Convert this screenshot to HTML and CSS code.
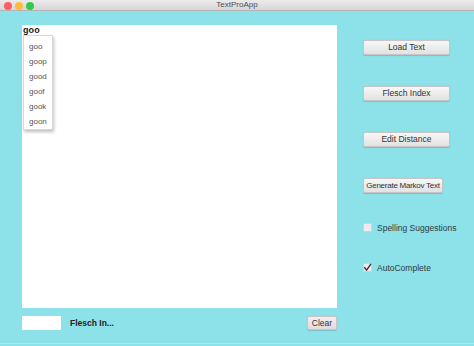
FILE: index.html
```html
<!DOCTYPE html>
<html>
<head>
<meta charset="utf-8">
<link rel="stylesheet" href="styles.css">
</head>
<body>
<div class="window">
  <div class="titlebar">
    <div class="lights">
      <span class="light red"></span>
      <span class="light yellow"></span>
      <span class="light green"></span>
    </div>
    <div class="title">TextProApp</div>
  </div>
  <div class="main">
    <div class="left">
      <div class="editor">
        <div class="typed">goo</div>
        <ul class="popup">
          <li>goo</li>
          <li>goop</li>
          <li>good</li>
          <li>goof</li>
          <li>gook</li>
          <li>goon</li>
        </ul>
      </div>
      <div class="bottom">
        <div class="field"></div>
        <div class="flesch">Flesch In...</div>
        <button class="btn clear">Clear</button>
      </div>
    </div>
    <div class="right">
      <button class="btn wide b1">Load Text</button>
      <button class="btn wide b2">Flesch Index</button>
      <button class="btn wide b3">Edit Distance</button>
      <button class="btn markov">Generate Markov Text</button>
      <label class="check c1"><span class="box"></span>Spelling Suggestions</label>
      <label class="check c2"><span class="box checked"><svg width="9" height="9" viewBox="0 0 9 9"><path d="M1.6 4.6 L3.6 7.2 L7.8 1.2" fill="none" stroke="#2a2a2a" stroke-width="1.3" stroke-linecap="round" stroke-linejoin="round"/></svg></span>AutoComplete</label>
    </div>
  </div>
</div>
</body>
</html>
```

FILE: styles.css
```css
* { box-sizing: border-box; }
html, body { margin: 0; padding: 0; }
body {
  width: 474px;
  height: 346px;
  overflow: hidden;
  background: #8de1e9;
  font-family: "Liberation Sans", Arial, sans-serif;
}
.window {
  width: 474px;
  height: 344px;
  background: #8de1e9;
  border-bottom: 1px solid #a8eaf0;
}
.titlebar {
  height: 11px;
  background: linear-gradient(#ebebeb, #d6d6d6);
  border-bottom: 1px solid #b4b4b4;
  position: relative;
  display: flex;
  align-items: center;
  justify-content: center;
}
.lights {
  position: absolute;
  left: 4px;
  top: 2px;
  display: flex;
  gap: 3px;
}
.light {
  width: 8px;
  height: 8px;
  border-radius: 50%;
  display: block;
}
.red { background: #fc605c; }
.yellow { background: #fdbc40; }
.green { background: #34c84a; }
.title {
  font-size: 8px;
  color: #4e4e4e;
  line-height: 10px;
}
.main {
  display: flex;
  padding: 14px 0 0 22px;
}
.left {
  width: 315px;
  display: flex;
  flex-direction: column;
}
.editor {
  height: 283px;
  background: #ffffff;
  position: relative;
}
.typed {
  font-size: 9px;
  font-weight: bold;
  color: #1a1a1a;
  padding: 1px 0 0 1px;
  line-height: 9px;
  letter-spacing: 0.1px;
}
.popup {
  position: absolute;
  left: 1px;
  top: 10px;
  width: 30px;
  height: 95px;
  margin: 0;
  padding: 3px 0 0 5px;
  list-style: none;
  background: #ffffff;
  border: 1px solid #d8d8d8;
  box-shadow: 1px 2px 3px rgba(0,0,0,0.25);
}
.popup li {
  font-size: 8px;
  color: #555555;
  height: 15px;
  line-height: 15px;
}
.bottom {
  display: flex;
  align-items: center;
  margin-top: 8px;
  height: 14px;
}
.field {
  width: 39px;
  height: 14px;
  background: #ffffff;
}
.flesch {
  margin-left: 9px;
  font-size: 8.5px;
  font-weight: bold;
  color: #222222;
}
.btn {
  font-family: "Liberation Sans", Arial, sans-serif;
  font-size: 8.5px;
  color: #333333;
  background: linear-gradient(#f7f7f7, #e2e2e2);
  border: 1px solid #c6c6c6;
  border-radius: 2px;
  padding: 0;
  margin: 0;
  height: 15px;
  line-height: 13px;
  text-align: center;
  white-space: nowrap;
  box-shadow: 0 0.5px 1px rgba(0,0,0,0.15);
}
.clear {
  margin-left: auto;
  width: 30px;
  height: 14px;
  background: linear-gradient(#f5eef0, #e2dadc);
}
.right {
  margin-left: 26px;
  display: flex;
  flex-direction: column;
  align-items: flex-start;
}
.wide { width: 87px; }
.b1 { margin-top: 15px; }
.b2 { margin-top: 31px; }
.b3 { margin-top: 31px; }
.markov {
  margin-top: 31px;
  width: 80px;
  height: 15px;
  font-size: 8px;
  letter-spacing: -0.25px;
}
.check {
  display: flex;
  align-items: center;
  font-size: 8.5px;
  color: #2f3b40;
  height: 9px;
  white-space: nowrap;
}
.c1 { margin-top: 30px; }
.c2 { margin-top: 31px; }
.box {
  width: 9px;
  height: 9px;
  background: #f1e9ed;
  border: 1px solid #d6d0d4;
  border-radius: 1px;
  margin-right: 5px;
  display: flex;
  align-items: center;
  justify-content: center;
}
.box svg { display: block; margin: -1px; }
```
